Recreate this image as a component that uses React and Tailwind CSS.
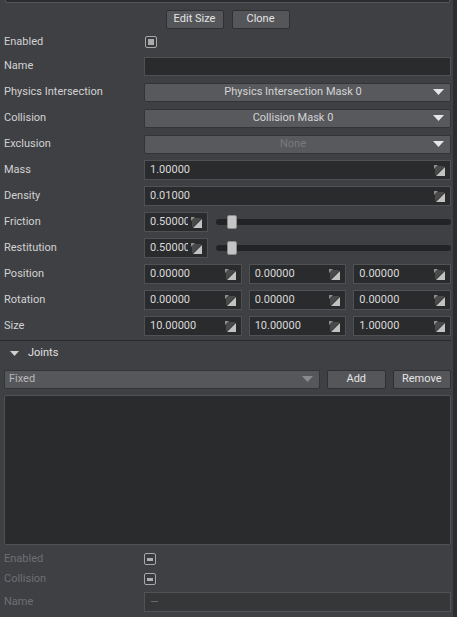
import React from 'react'

const font = { fontFamily: 'Roboto, "Liberation Sans", sans-serif' }

const ResizeIcon = () => (
  <svg width="11" height="11" viewBox="0 0 11 11" className="shrink-0">
    <polygon points="0,0 4,0 0,4" fill="#8e8e8e" />
    <polygon points="11,2 11,11 2,11" fill="#c2c2c2" />
    <polygon points="3,1 10,1 10,2 2,10 1,10 1,3" fill="#6a6a6a" opacity="0.5" />
  </svg>
)

const Arrow = ({ dim }) => (
  <svg width="11" height="7" viewBox="0 0 11 7" className="shrink-0">
    <polygon points="0,0 11,0 5.5,6" fill={dim ? '#8a8b8e' : '#e6e6e6'} />
  </svg>
)

const Checkbox = ({ indeterminate }) => (
  <div className="w-[12px] h-[12px] border border-[#a8a8a8] rounded-[2px] bg-[#3a3b3e] p-[2px] flex items-center">
    {indeterminate ? (
      <div className="w-full h-[3px] bg-[#b0b0b0]" />
    ) : (
      <div className="w-full h-full bg-[#a9a9a9]" />
    )}
  </div>
)

const Row = ({ label, children, dim, h = 'h-[26px]' }) => (
  <div className={`flex items-center ${h}`}>
    <div className={`w-[140px] shrink-0 text-[11px] ${dim ? 'text-[#6e6f73]' : 'text-[#d2d2d2]'}`}>{label}</div>
    <div className="flex-1 flex items-center">{children}</div>
  </div>
)

const NumInput = ({ value, className = '' }) => (
  <div className={`h-[20px] bg-[#2a2b2d] border border-[#505155] flex items-center gap-[3px] pl-[5px] pr-[5px] text-[11px] text-[#dadada] ${className}`}>
    <span className="flex-1 min-w-0 overflow-hidden whitespace-nowrap">{value}</span>
    <ResizeIcon />
  </div>
)

const Select = ({ value, dim }) => (
  <div className="flex-1 h-[19px] bg-[#58595d] border border-[#333437] rounded-[2px] flex items-center pl-2 pr-[6px] text-[11px]">
    <span className={`flex-1 text-center ${dim ? 'text-[#78797c]' : 'text-[#d4d4d4]'}`}>{value}</span>
    <Arrow />
  </div>
)

const Slider = () => (
  <div className="flex-1 ml-[8px] h-[14px] relative flex items-center">
    <div className="w-full h-[6px] rounded-full bg-[#222325]" />
    <div className="absolute left-[11px] top-0 w-[10px] h-[14px] rounded-[2px] bg-[#c4c4c4] border border-[#8c8c8c]" />
  </div>
)

const Button = ({ children, className = '' }) => (
  <button className={`h-[19px] bg-[#55565a] border border-[#2f3033] rounded-[2px] text-[11px] text-[#e4e4e4] flex items-center justify-center ${className}`}>
    {children}
  </button>
)

export default function App() {
  return (
    <div className="w-[457px] h-[617px] bg-[#3f4044] flex overflow-hidden" style={font}>
      <div className="flex-1 flex flex-col pl-[4px] pr-[2px]">
        <div className="h-[3px] ml-[1px] mr-[1px] bg-[#2a2b2d] border-x border-b border-[#55565a] rounded-b-[2px]" />

        <div className="flex justify-center gap-[8px] mt-[7px]">
          <Button className="w-[58px]">Edit Size</Button>
          <Button className="w-[58px]">Clone</Button>
        </div>

        <div className="flex items-center h-[24px] pt-[2px]">
          <div className="w-[141px] shrink-0 text-[11px] text-[#d2d2d2]">Enabled</div>
          <Checkbox />
        </div>

        <Row label="Name">
          <div className="flex-1 h-[19px] bg-[#2a2b2d] border border-[#505155]" />
        </Row>
        <Row label="Physics Intersection"><Select value="Physics Intersection Mask 0" /></Row>
        <Row label="Collision"><Select value="Collision Mask 0" /></Row>
        <Row label="Exclusion"><Select value="None" dim /></Row>
        <Row label="Mass"><NumInput value="1.00000" className="flex-1" /></Row>
        <Row label="Density"><NumInput value="0.01000" className="flex-1" /></Row>
        <Row label="Friction">
          <NumInput value="0.50000" className="w-[64px]" />
          <Slider />
        </Row>
        <Row label="Restitution">
          <NumInput value="0.50000" className="w-[64px]" />
          <Slider />
        </Row>
        {[
          ['Position', '0.00000', '0.00000', '0.00000'],
          ['Rotation', '0.00000', '0.00000', '0.00000'],
          ['Size', '10.00000', '10.00000', '1.00000'],
        ].map(([label, a, b, c]) => (
          <Row key={label} label={label}>
            <div className="flex-1 grid grid-cols-3 gap-[7px]">
              <NumInput value={a} />
              <NumInput value={b} />
              <NumInput value={c} />
            </div>
          </Row>
        ))}

        <div className="h-px bg-[#28292b] mt-[1px] -ml-[4px]" />

        <div className="flex items-center h-[24px] pl-[6px] gap-[9px] text-[11px] text-[#e0e0e0]">
          <svg width="9" height="5" viewBox="0 0 9 5"><polygon points="0,0 9,0 4.5,5" fill="#cfcfcf" /></svg>
          Joints
        </div>

        <div className="flex gap-[7px] mt-[5px] h-[19px]">
          <div className="w-[316px] h-[19px] bg-[#56575b] border border-[#333437] rounded-[2px] flex items-center pl-[4px] pr-[6px] text-[11px] text-[#b8b8b8]">
            <span className="flex-1">Fixed</span>
            <Arrow dim />
          </div>
          <Button className="flex-1">Add</Button>
          <Button className="flex-1">Remove</Button>
        </div>

        <div className="mt-[6px] h-[150px] bg-[#2a2b2d] border border-[#505155] rounded-[2px]" />

        <div className="mt-[4px]">
          <Row label="Enabled" dim h="h-[20px]"><Checkbox indeterminate /></Row>
          <Row label="Collision" dim h="h-[20px]"><Checkbox indeterminate /></Row>
          <Row label="Name" dim>
            <div className="flex-1 h-[20px] bg-[#363739] border border-[#515256] flex items-center pl-[5px] text-[11px] text-[#6e6f73]">—</div>
          </Row>
        </div>
      </div>
      <div className="w-[4px] bg-[#2c2d30]" />
    </div>
  )
}
